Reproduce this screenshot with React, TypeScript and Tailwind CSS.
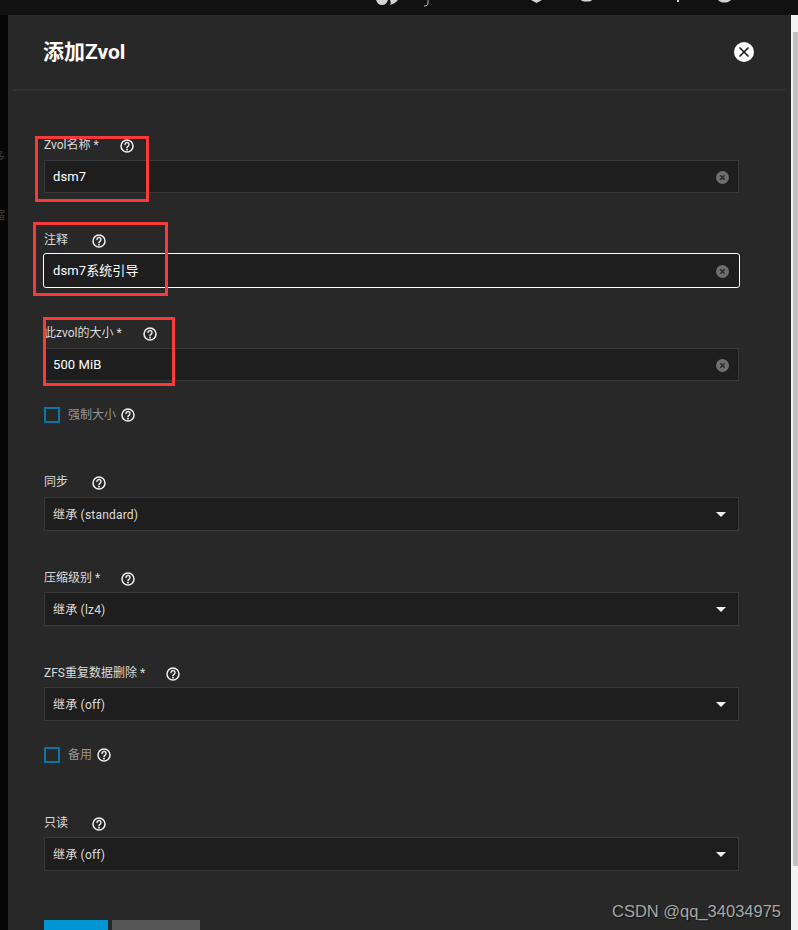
import React from "react";

function Help({ className = "" }: { className?: string }) {
  return (
    <svg viewBox="0 0 14 14" className={"w-[14px] h-[14px] shrink-0 " + className} fill="none">
      <circle cx="7" cy="7" r="6" stroke="#f2f2f2" strokeWidth="1.5" />
      <path d="M5 5.500a2 2 0 1 1 3.200 1.600c-.7.5-1.200.9-1.200 1.700" stroke="#f2f2f2" strokeWidth="1.400" strokeLinecap="round" />
      <circle cx="7" cy="10.700" r="0.900" fill="#f2f2f2" />
    </svg>
  );
}

function ClearBtn() {
  return (
    <svg viewBox="0 0 13 13" className="w-[13px] h-[13px] shrink-0 mt-px">
      <circle cx="6.500" cy="6.500" r="6.500" fill="#6e6e6e" />
      <path d="M4.300 4.300l4.400 4.400M8.700 4.300l-4.400 4.400" stroke="#2a2a2a" strokeWidth="1.400" />
    </svg>
  );
}

function Label({ text, helpClass }: { text: string; helpClass: string }) {
  return (
    <div className="flex items-center h-[16px] text-[12px] leading-[16px] text-[#dadada]">
      <span className="whitespace-nowrap mt-[2px]">{text}</span>
      <Help className={"mt-[3px] " + helpClass} />
    </div>
  );
}

function TextInput({ value, mt }: { value: string; mt: string }) {
  return (
    <div
      className={
        "flex items-center justify-between h-[33px] pl-[8px] pr-[9px] bg-[#1e1e1e] border border-[#383838] text-[13px] tracking-[0.1px] text-white " +
        mt
      }
    >
      <span>{value}</span>
      <ClearBtn />
    </div>
  );
}

function FocusedInput({ value }: { value: string }) {
  return (
    <div className="flex items-center justify-between h-[35px] -mx-px mt-[6px] -mb-px pl-[9px] pr-[10px] bg-[#1e1e1e] border border-white rounded-[3px] text-[13px] tracking-[0.1px] text-white">
      <span>{value}</span>
      <ClearBtn />
    </div>
  );
}

function SelectBox({ value, mt }: { value: string; mt: string }) {
  return (
    <div
      className={
        "flex items-center justify-between h-[34px] pl-[8px] pr-[12px] bg-[#1e1e1e] border border-[#383838] text-[12px] tracking-[0.2px] text-[#dcdcdc] " +
        mt
      }
    >
      <span className="mt-[2px]">{value}</span>
      <span className="w-0 h-0 border-l-[5px] border-r-[5px] border-t-[5px] border-l-transparent border-r-transparent border-t-[#f0f0f0]" />
    </div>
  );
}

function Check({ text, helpClass }: { text: string; helpClass: string }) {
  return (
    <div className="flex items-center h-[16px] mt-[26px]">
      <span className="w-[16px] h-[16px] border-2 border-[#0a76a6]" />
      <span className="ml-[8px] text-[12px] text-[#969696] whitespace-nowrap">{text}</span>
      <Help className={helpClass} />
    </div>
  );
}

export default function App() {
  return (
    <div
      className="relative h-[930px] w-[798px] overflow-hidden bg-[#060606] flex flex-col"
      style={{ fontFamily: 'Roboto, "Noto Sans CJK SC", sans-serif' }}
    >
      <div className="h-[15px] bg-[#111111] shrink-0 overflow-hidden">
        <svg viewBox="0 0 798 15" className="w-[798px] h-[15px]" fill="#d4d4d4">
          <path d="M376 0c1 3 3 5 6 5s5-2 6-5zM390 0h8c-2 2-4 4-8 5 1-1 1-3 0-5z" />
          <path d="M428 0v3c0 2-1 3-4 3" stroke="#bbb" strokeWidth="1" fill="none" />
          <path d="M531 0h11l-5.500 3z" />
          <path d="M581 0h11c-1 1-2 1.500-5.500 1.500S582 1 581 0z" />
          <path d="M677 0h2v2h-2z" />
          <path d="M718 0h13c-2 2-4 2.500-6.500 2.500S720 2 718 0z" />
        </svg>
      </div>
      <div className="flex flex-1 min-h-0">
        <div className="relative w-[8px] shrink-0 bg-[#060606] overflow-hidden text-[12px] leading-[14px] text-[#3c3c3c]">
          <span className="absolute left-[-7px] top-[135px] whitespace-nowrap">多</span>
          <span className="absolute left-[-7px] top-[194px] whitespace-nowrap">缩</span>
        </div>
        <div className="relative w-[783px] shrink-0 bg-[#282828]">
          <div className="h-[74px] flex items-center justify-between pl-[35px] pr-[37px]">
            <h1 className="text-[21px] font-bold text-white leading-[26px] -mt-[1px]">添加Zvol</h1>
            <div className="w-[20px] h-[20px] rounded-full bg-white flex items-center justify-center -mt-[1px]">
              <svg viewBox="0 0 12 12" className="w-[12px] h-[12px]">
                <path d="M1.500 1.500l9 9M10.500 1.500l-9 9" stroke="#1a1a1a" strokeWidth="1.600" />
              </svg>
            </div>
          </div>
          <div className="h-[2px] mx-[5px] bg-[#303030]" />
          <div className="pl-[36px] w-[731px] pt-[45px]">
            <Label text="Zvol名称 *" helpClass="ml-[21px]" />
            <TextInput value="dsm7" mt="mt-[8px]" />

            <div className="mt-[38px]">
              <Label text="注释" helpClass="ml-[24px]" />
            </div>
            <FocusedInput value="dsm7系统引导" />

            <div className="mt-[37px]">
              <Label text="此zvol的大小 *" helpClass="ml-[21px]" />
            </div>
            <TextInput value="500 MiB" mt="mt-[8px]" />

            <Check text="强制大小" helpClass="ml-[5px]" />

            <div className="mt-[50px]">
              <Label text="同步" helpClass="ml-[24px]" />
            </div>
            <SelectBox value="继承 (standard)" mt="mt-[8px]" />

            <div className="mt-[38px]">
              <Label text="压缩级别 *" helpClass="ml-[21px]" />
            </div>
            <SelectBox value="继承 (lz4)" mt="mt-[7px]" />

            <div className="mt-[38px]">
              <Label text="ZFS重复数据删除 *" helpClass="ml-[21px]" />
            </div>
            <SelectBox value="继承 (off)" mt="mt-[7px]" />

            <Check text="备用" helpClass="ml-[5px]" />

            <div className="mt-[51px]">
              <Label text="只读" helpClass="ml-[24px]" />
            </div>
            <SelectBox value="继承 (off)" mt="mt-[7px]" />

            <div className="flex gap-[4px] mt-[49px]">
              <div className="w-[64px] h-[36px] bg-[#0095d5]" />
              <div className="w-[88px] h-[36px] bg-[#565656]" />
            </div>
          </div>
        </div>
        <div className="w-[7px] shrink-0 bg-[#f1f1f1] pl-[2px] pt-[17px]">
          <div className="h-[834px] bg-[#c1c1c1]" />
        </div>
      </div>

      {/* red annotation rectangles */}
      <div className="absolute left-[35px] top-[136px] w-[114px] h-[66px] border-[3px] border-[#fa3a3a]" />
      <div className="absolute left-[33px] top-[222px] w-[135px] h-[74px] border-[3px] border-[#fa3a3a]" />
      <div className="absolute left-[43px] top-[317px] w-[132px] h-[69px] border-[3px] border-[#fa3a3a]" />

      {/* watermark */}
      <div
        className="absolute left-[612px] top-[901px] text-[16.500px] leading-[20px] text-[#a8a8a8] whitespace-nowrap [text-shadow:1px_1px_1px_#111]"
        style={{ fontFamily: '"Liberation Sans", sans-serif' }}
      >
        CSDN @qq_34034975
      </div>
    </div>
  );
}
